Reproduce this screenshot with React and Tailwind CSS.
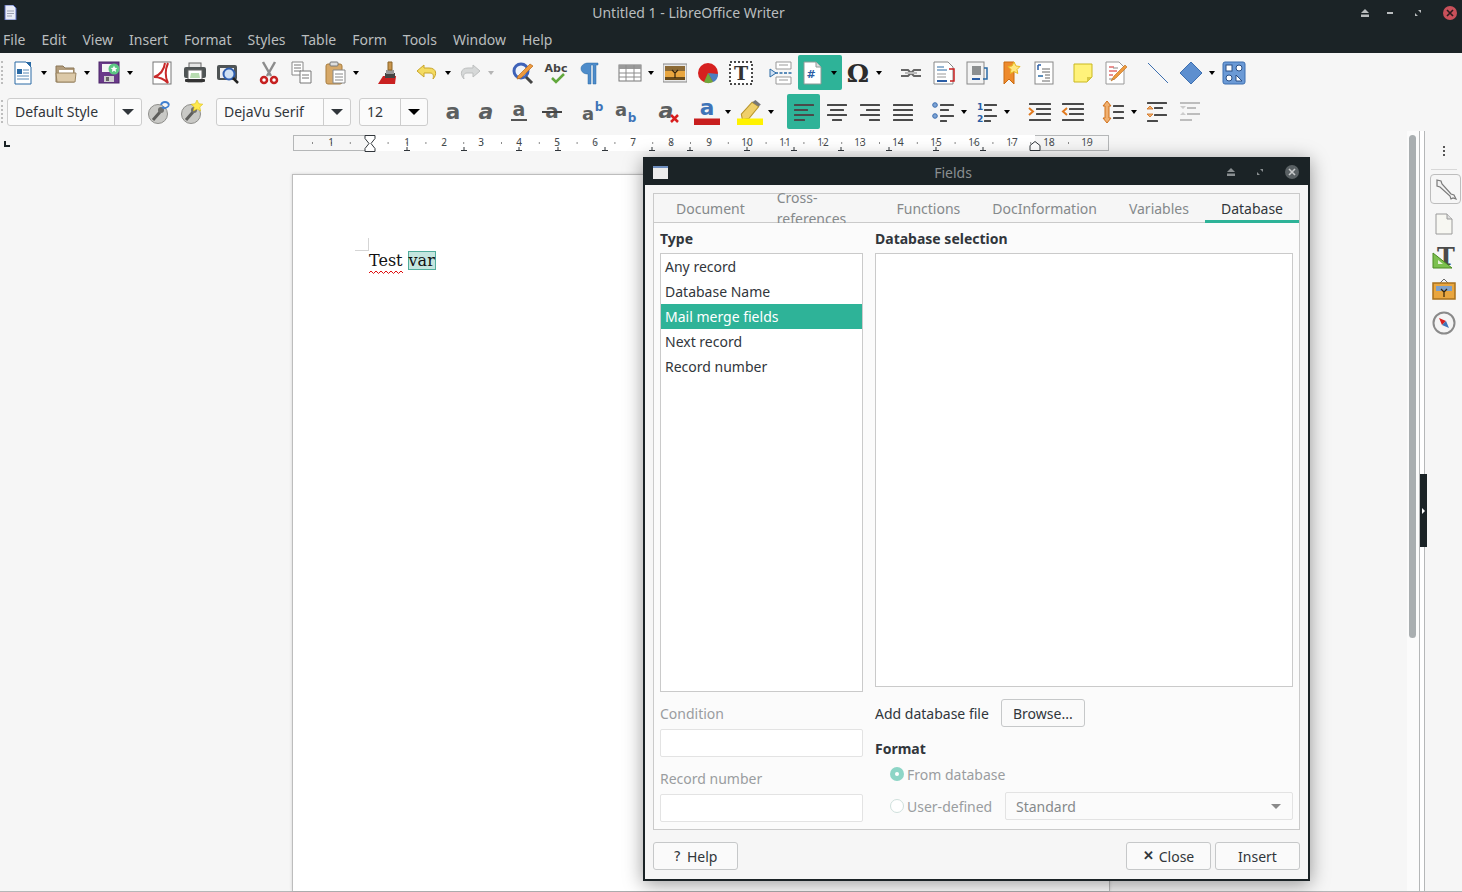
const Svg = ({ size = 24, children }) => (
  <svg width={size} height={size} viewBox="0 0 24 24" className="block shrink-0">{children}</svg>
)

const Lines = ({ rows }) => (
  <>
    {rows.map(([x, y, w], i) => (
      <rect key={i} x={x} y={y} width={w} height="2" rx="0.5" fill="#4a4a4a" />
    ))}
  </>
)

const Letter = ({ ch, x = 12, y = 17, size = 20, fill = "#5c5f60", style = "normal" }) => (
  <text x={x} y={y} textAnchor="middle" fontFamily="DejaVu Sans" fontWeight="700" fontStyle={style} fontSize={size} fill={fill}>{ch}</text>
)

const Icons = {
  newDoc: <Svg><path d="M4 1h11l5 5v17H4z" fill="#fff" stroke="#2a6aa5" /><path d="M15 1h5v5z" fill="#2a6aa5" /><rect x="6" y="8" width="5" height="5" fill="#2a6aa5" /><path d="M12 9h6M12 12h6M6 15h12M6 18h12" stroke="#5b8ab5" /></Svg>,
  open: <Svg><path d="M2 5h7l2 2h9v14H2z" fill="#b39d7d" stroke="#8b7657" /><path d="M5 9h14v3H5z" fill="#fff" /><path d="M2 12h20l-1 9H3z" fill="#dcc9a8" stroke="#9a8562" /></Svg>,
  save: <Svg><rect x="2" y="1" width="20" height="21" fill="#6a3a8a" stroke="#4a2468" /><rect x="5" y="3" width="13" height="8" fill="#f3f3f3" /><rect x="7" y="15" width="10" height="6" fill="#cfcfcf" /><rect x="9" y="16" width="3" height="4" fill="#666" /><circle cx="17" cy="8" r="5.5" fill="#5bc783" /><path d="M17 4.5l1 2.3 2.4.2-1.8 1.6.5 2.4-2.1-1.2-2.1 1.2.5-2.4L13.6 7l2.4-.2z" fill="#fff" /></Svg>,
  pdf: <Svg><rect x="3" y="1" width="18" height="22" fill="#fff" stroke="#777" /><path d="M15 2C14 9 10 14 4 16c5 0 10 2 14 6-3-6-3-13 0-20" fill="none" stroke="#c92a2a" strokeWidth="2" /></Svg>,
  print: <Svg><rect x="6" y="2" width="12" height="5" fill="#e5e5e5" stroke="#666" /><rect x="1" y="6" width="22" height="11" rx="2" fill="#4f5455" /><rect x="5" y="9" width="14" height="12" fill="#fff" stroke="#666" /><path d="M8 12h8l1 5H7z" fill="#b7dcb0" /><rect x="2" y="18" width="20" height="3" rx="1" fill="#333" /></Svg>,
  preview: <Svg><rect x="1" y="4" width="20" height="15" rx="2" fill="#4f5455" /><rect x="4" y="7" width="14" height="10" fill="#eee" /><circle cx="13" cy="13" r="5.5" fill="#cfe0f3" stroke="#2f5fb0" strokeWidth="2" /><path d="M17 17l5 5" stroke="#222" strokeWidth="2.5" /></Svg>,
  cut: <Svg><path d="M6 1l8 14M18 1l-8 14" stroke="#8c8c8c" strokeWidth="2.5" /><circle cx="7" cy="19" r="3" fill="#fff" stroke="#c62020" strokeWidth="2.5" /><circle cx="17" cy="19" r="3" fill="#fff" stroke="#c62020" strokeWidth="2.5" /></Svg>,
  copy: <Svg><path d="M2 1h11v13H2z" fill="#fff" stroke="#888" /><path d="M4 4h7M4 7h7M4 10h7" stroke="#777" /><path d="M10 10h11v12H10z" fill="#fff" stroke="#777" /><path d="M12 14h7M12 17h7" stroke="#777" /></Svg>,
  paste: <Svg><rect x="3" y="3" width="16" height="20" rx="2" fill="#d6a868" stroke="#a87c3d" /><rect x="7" y="1" width="8" height="4" rx="1" fill="#ddd" stroke="#777" /><path d="M10 9h12v13H10z" fill="#fff" stroke="#888" /><path d="M12 13h8M12 16h8M12 19h8" stroke="#888" /></Svg>,
  clone: <Svg><path d="M2 23l5-8h13l-1 8z" fill="#c92020" /><rect x="9" y="12" width="10" height="5" fill="#444" /><rect x="10" y="9" width="8" height="4" fill="#999" /><path d="M12 1h4v8h-4z" fill="#c9964d" stroke="#8c6527" /></Svg>,
  undo: <Svg><path d="M9 4L2 10l7 6v-4h6c3 0 4 2 3 6 4-4 4-11-4-11H9z" fill="#f4db61" stroke="#c9a52a" /></Svg>,
  redo: <Svg><path d="M15 4l7 6-7 6v-4H9c-3 0-4 2-3 6-4-4-4-11 4-11h5z" fill="#d6d8d8" stroke="#bdbfbf" /></Svg>,
  find: <Svg><circle cx="10" cy="10" r="7" fill="#eef3fa" stroke="#3e62b8" strokeWidth="3" /><path d="M15 16l6 6" stroke="#444" strokeWidth="3" /><path d="M7 15L19 3l3 2-12 12-4 1z" fill="#ee9a3e" stroke="#b96a1a" strokeWidth="0.7" /></Svg>,
  spell: <Svg><text x="12" y="11" textAnchor="middle" fontFamily="DejaVu Sans" fontWeight="700" fontSize="11" fill="#444">Abc</text><path d="M8 17l4 4 8-8" fill="none" stroke="#62a83c" strokeWidth="2.5" /></Svg>,
  para: <Svg><path d="M10 2h10v2h-2v19h-3V4h-2v19h-3V13c-4 0-7-2-7-5.500S7 2 10 2z" fill="#4e8cca" stroke="#2a6aa5" strokeWidth="0.5" /></Svg>,
  table: <Svg><rect x="1" y="4" width="22" height="16" fill="#fff" stroke="#777" /><rect x="1" y="4" width="22" height="4" fill="#9a9a9a" /><path d="M1 12h22M1 16h22M8 4v16M16 4v16" stroke="#8c8c8c" /></Svg>,
  image: <Svg><rect x="0" y="3" width="24" height="18" fill="#e8e8e8" stroke="#888" /><rect x="2" y="5" width="20" height="14" fill="#e9a63f" /><rect x="2" y="5" width="20" height="5" fill="#8c6a35" /><path d="M2 16h20v3H2z" fill="#6a4b1a" /><path d="M12 17v-6M12 12l-3-3M12 12l3-3" stroke="#33240d" strokeWidth="1.200" /></Svg>,
  chart: <Svg><circle cx="12" cy="12" r="10" fill="#d6201f" /><path d="M12 12l10 1c0 4-2 7-5 8z" fill="#4c7fc0" /><path d="M12 12l5 9c-3 1-5 2-9 0z" fill="#70a83a" /></Svg>,
  textbox: <Svg><rect x="1" y="1" width="22" height="22" fill="#fff" stroke="#111" strokeWidth="1.500" strokeDasharray="2 2" /><text x="12" y="19" textAnchor="middle" fontFamily="DejaVu Serif" fontWeight="700" fontSize="19" fill="#333">T</text></Svg>,
  pageBreak: <Svg><path d="M7 1h15v7H7z" fill="#fff" stroke="#999" /><path d="M10 4h9" stroke="#999" /><path d="M7 23v-7h15v7z" fill="#fff" stroke="#999" /><path d="M10 19h9" stroke="#999" /><path d="M6 12h18" stroke="#2a6aa5" strokeDasharray="3 1.500" strokeWidth="1.500" /><path d="M1 8l6 4-6 4z" fill="#cfe0f3" stroke="#2a6aa5" /></Svg>,
  field: <Svg><path d="M4 1h12l5 5v17H4z" fill="#fff" stroke="#8d9a96" /><path d="M16 1v5h5" fill="#ddd" stroke="#8d9a96" /><text x="11" y="17" textAnchor="middle" fontFamily="DejaVu Sans" fontWeight="700" fontSize="11" fill="#2a5da5">#</text></Svg>,
  omega: <Svg><text x="12" y="21" textAnchor="middle" fontFamily="DejaVu Serif" fontWeight="700" fontSize="25" fill="#2c2c2c">Ω</text></Svg>,
  link: <Svg><path d="M2 9h7l3 3 3-3h7M2 15h7l3-3 3 3h7" fill="none" stroke="#666" strokeWidth="2" /><path d="M6 12h12" stroke="#bbb" strokeWidth="2" /></Svg>,
  footnote: <Svg><path d="M2 1h14l5 5v17H2z" fill="#fff" stroke="#888" /><path d="M5 6h7M5 9h10" stroke="#2a6aa5" /><path d="M5 13h9M5 16h9" stroke="#999" /><rect x="5" y="19" width="10" height="2" fill="#2a5da5" /><path d="M17 8h5v12h-4" fill="none" stroke="#c92020" strokeWidth="1.500" /></Svg>,
  crossRef: <Svg><rect x="2" y="1" width="17" height="22" fill="#f3f3f3" stroke="#888" /><rect x="7" y="5" width="9" height="9" fill="#8c8f90" /><rect x="7" y="17" width="8" height="2" fill="#2a5da5" /><path d="M19 7h3v11h-4" fill="none" stroke="#2a6aa5" strokeWidth="1.500" /></Svg>,
  bookmark: <Svg><path d="M5 1h10v22l-5-5-5 5z" fill="#ee8a2c" stroke="#c96a10" /><path d="M15 1l2 4 4 .5-3 3 .8 4-3.800-2-3.800 2 .8-4-3-3 4-.5z" fill="#ffe680" stroke="#e8b820" /></Svg>,
  index: <Svg><rect x="3" y="1" width="18" height="22" fill="#fff" stroke="#888" /><path d="M6 4h3M6 4v5" stroke="#2a5da5" strokeWidth="1.500" /><path d="M10 8h8M10 11h8M13 14h5M13 17h5M10 20h8" stroke="#666" /><path d="M6 15h5" stroke="#2a6aa5" strokeWidth="1.500" /></Svg>,
  note: <Svg><path d="M3 3h18v13l-5 5H3z" fill="#fff27a" stroke="#c9b820" /><path d="M21 16h-5v5z" fill="#d8c944" /></Svg>,
  track: <Svg><path d="M2 1h13l5 5v17H2z" fill="#fff" stroke="#999" /><path d="M5 6h5M5 10h8M5 14h4" stroke="#d62020" /><path d="M5 18h6M9 7h5" stroke="#888" /><path d="M7 20l3-5L21 4l2 2-11 11z" fill="#ee9a3e" stroke="#b96a1a" strokeWidth="0.600" /></Svg>,
  line: <Svg><path d="M2 2l20 20" stroke="#3d6fb0" /></Svg>,
  diamond: <Svg><path d="M12 1l11 11-11 11L1 12z" fill="#5d8fcf" stroke="#3d6fb0" /></Svg>,
  shapes: <Svg><rect x="1" y="1" width="22" height="22" rx="2" fill="#6b9ad6" stroke="#3d6fb0" /><rect x="4" y="4" width="6" height="6" fill="#fff" stroke="#2a4f85" /><circle cx="17" cy="7" r="3" fill="#fff" stroke="#2a4f85" /><circle cx="7" cy="17" r="3" fill="#fff" stroke="#2a4f85" /><path d="M14 20v-6l6 6z" fill="#fff" stroke="#2a4f85" /></Svg>,
  styleUpdate: <Svg><circle cx="11" cy="14" r="9.500" fill="#c9c9c6" stroke="#8d8d8a" /><path d="M6 20l7-8" stroke="#5e5e5c" strokeWidth="3" /><circle cx="14" cy="10" r="3" fill="#6e6e6b" /><path d="M14 5c1-4 7-4 8 0M22 5c-1 3-5 4-7 2" fill="none" stroke="#3f7fd0" strokeWidth="1.800" /></Svg>,
  styleNew: <Svg><circle cx="11" cy="14" r="9.500" fill="#c9c9c6" stroke="#8d8d8a" /><path d="M6 20l7-8" stroke="#5e5e5c" strokeWidth="3" /><circle cx="14" cy="10" r="3" fill="#6e6e6b" /><path d="M17 0l1.800 3.700 4 .5-3 2.800.8 4-3.600-2-3.600 2 .8-4-3-2.800 4-.5z" fill="#ffe94d" stroke="#d8bd10" strokeWidth="0.600" /></Svg>,
  bold: <Svg><Letter ch="a" size={22} y={19} /></Svg>,
  italic: <Svg><Letter ch="a" size={22} y={19} style="italic" /></Svg>,
  underline: <Svg><Letter ch="a" size={19} y={16} /><rect x="4" y="19" width="16" height="2" fill="#555" /></Svg>,
  strike: <Svg><Letter ch="a" size={20} y={18} /><rect x="2" y="11" width="20" height="2" fill="#444" /></Svg>,
  sup: <Svg><Letter ch="a" x={8} size={18} y={20} /><Letter ch="b" x={19} size={12} y={11} fill="#3f74b8" /></Svg>,
  sub: <Svg><Letter ch="a" x={8} size={18} y={16} /><Letter ch="b" x={19} size={12} y={22} fill="#3f74b8" /></Svg>,
  clear: <Svg><Letter ch="a" x={10} size={22} y={18} style="italic" /><path d="M15 15l7 7M22 15l-7 7" stroke="#d81e1e" strokeWidth="2.500" /></Svg>,
  fontColor: <Svg size={26}><Letter ch="a" size={20} y={15} fill="#3f74b8" /><rect x="0" y="18" width="24" height="6" fill="#c81e1e" /></Svg>,
  highlight: <Svg size={26}><path d="M4 14L14 3l6 4-9 11-6 1z" fill="#efcf6a" stroke="#b9962a" /><path d="M14 3l3-2 5 4-2 2z" fill="#777" /><rect x="0" y="18" width="24" height="6" fill="#fff200" /></Svg>,
  left: <Svg><Lines rows={[[2, 4, 20], [2, 9, 14], [2, 14, 20], [2, 19, 11]]} /></Svg>,
  center: <Svg><Lines rows={[[2, 4, 20], [5, 9, 14], [2, 14, 20], [7, 19, 10]]} /></Svg>,
  right: <Svg><Lines rows={[[2, 4, 20], [8, 9, 14], [2, 14, 20], [11, 19, 11]]} /></Svg>,
  justify: <Svg><Lines rows={[[2, 4, 20], [2, 9, 20], [2, 14, 20], [2, 19, 20]]} /></Svg>,
  bullets: <Svg><circle cx="4" cy="5" r="2.300" fill="#7da3d4" stroke="#3d6fb0" /><circle cx="4" cy="16" r="2.300" fill="#7da3d4" stroke="#3d6fb0" /><Lines rows={[[9, 4, 14], [9, 9, 9], [9, 15, 14], [9, 20, 7]]} /></Svg>,
  numbers: <Svg><text x="3" y="10" fontFamily="DejaVu Sans" fontWeight="700" fontSize="9" fill="#2a5da5">1</text><text x="3" y="22" fontFamily="DejaVu Sans" fontWeight="700" fontSize="9" fill="#2a5da5">2</text><Lines rows={[[10, 4, 13], [10, 9, 8], [10, 15, 13], [10, 20, 7]]} /></Svg>,
  indent: <Svg><Lines rows={[[1, 3, 22], [8, 8, 15], [8, 13, 15], [1, 19, 22]]} /><path d="M1 8l4 3.500L1 15" fill="none" stroke="#e07a20" strokeWidth="2" /></Svg>,
  outdent: <Svg><Lines rows={[[1, 3, 22], [8, 8, 15], [8, 13, 15], [1, 19, 22]]} /><path d="M6 8l-4 3.500L6 15" fill="none" stroke="#e07a20" strokeWidth="2" /></Svg>,
  lineSpace: <Svg><path d="M6 1l4 5H8v12h2l-4 5-4-5h2V6H2z" fill="#f0b070" stroke="#d0701a" /><Lines rows={[[12, 5, 11], [12, 11, 11], [12, 17, 11]]} /></Svg>,
  paraUp: <Svg><Lines rows={[[2, 2, 20], [9, 7, 9], [9, 14, 13], [2, 20, 11]]} /><path d="M2 9l3-3 3 3zM2 14l3 3 3-3z" fill="#f0b070" stroke="#d0701a" strokeWidth="0.800" /></Svg>,
  paraDown: <Svg><rect x="2" y="2" width="20" height="2" fill="#bdbdbd" /><rect x="9" y="7" width="9" height="2" fill="#bdbdbd" /><rect x="9" y="13" width="13" height="2" fill="#bdbdbd" /><rect x="2" y="19" width="12" height="2" fill="#bdbdbd" /><path d="M2 6l3 3 3-3zM2 15l3-3 3 3z" fill="#ccc" /></Svg>,
}

const Tool = ({ icon, className = "" }) => (
  <div className={"flex w-[33px] shrink-0 items-center justify-center " + className}>{Icons[icon]}</div>
)

const Arrow = ({ className = "", off = false }) => (
  <div className={"flex w-[10px] shrink-0 items-center justify-center " + className}>
    <span className={off ? "border-x-[3px] border-t-[4px] border-x-transparent border-t-[#b5b5b5]" : "border-x-[3px] border-t-[4px] border-x-transparent border-t-black"} />
  </div>
)

const Grip = () => <div className="absolute left-px top-2 bottom-2 w-[2px] border-l-2 border-dotted border-[#bdbdbd]" />

const ToolCombo = ({ label, className, arrowClass, dark = false }) => (
  <div className={"flex h-[28px] shrink-0 items-stretch rounded-[3px] border border-[#cdcdcd] bg-[#fbfbfb] " + className}>
    <span className="flex flex-1 items-center pl-[7px] text-[14px] text-[#31363b]">{label}</span>
    <span className={"flex items-center justify-center border-l border-[#cdcdcd] " + arrowClass}>
      <span className={dark ? "border-x-[6px] border-t-[6px] border-x-transparent border-t-black" : "border-x-[6px] border-t-[6px] border-x-transparent border-t-[#31363b]"} />
    </span>
  </div>
)

const WindowButtons = ({ dialog }) => {
  const tone = dialog ? "#8a8f91" : "#b9bdbe"
  return (
    <>
      <svg width="10" height="8" viewBox="0 0 10 8" className="shrink-0"><path d="M5 0l4 4H1zM1 5.500h8V8H1z" fill={tone} /></svg>
      {!dialog && <span className="ml-[17px] h-[2px] w-[6px] bg-[#b9bdbe]" />}
      <svg width="6" height="6" viewBox="0 0 6 6" className={dialog ? "ml-[21px] shrink-0" : "ml-[22px] shrink-0"}><path d="M0 6V3l3 3zM6 0v3L3 0z" fill={tone} /></svg>
      <span className={dialog ? "ml-[22px] flex h-[14px] w-[14px] items-center justify-center rounded-full bg-[#5a6164]" : "ml-[22px] flex h-[14px] w-[14px] items-center justify-center rounded-full bg-[#c9505a]"}>
        <svg width="8" height="8" viewBox="0 0 8 8"><path d="M1 1l6 6M7 1L1 7" stroke={dialog ? "#c9cbcc" : "#2a1c1e"} strokeWidth="1.600" /></svg>
      </span>
    </>
  )
}

const Ruler = () => {
  const nums = [[331, "1"], [407, "1"], [444, "2"], [481, "3"], [519, "4"], [557, "5"], [595, "6"], [633, "7"], [671, "8"], [709, "9"], [747, "10"], [785, "11"], [823, "12"], [860, "13"], [898, "14"], [936, "15"], [974, "16"], [1012, "17"], [1049, "18"], [1087, "19"]]
  const ticks = []
  for (let x = 312; x < 1105; x += 18.9) ticks.push(x)
  return (
    <svg width="820" height="20" viewBox="292 133 820 20" className="block shrink-0">
      <rect x="293.500" y="135.500" width="815" height="15" fill="#f6f6f6" stroke="#b5b7b8" />
      <rect x="370" y="135" width="665" height="16" fill="#fff" />
      {ticks.map(x => <rect key={x} x={x} y="142" width="1" height="2" fill="#8a8a8a" />)}
      {nums.map(([x, t]) => (
        <text key={x} x={x} y="146" textAnchor="middle" fontFamily="Noto Sans" fontSize="10" fill="#44494c">{t}</text>
      ))}
      {[407, 464, 519, 558, 605, 652, 690, 747, 794, 841, 889, 936, 983].map(x => (
        <path key={x} d={`M${x - 3} 150.500h6M${x} 147v3`} stroke="#31363b" fill="none" />
      ))}
      <path d="M365 135.500h10v3l-4 5 4 5v3h-10v-3l4-5-4-5z" fill="#fff" stroke="#31363b" />
      <path d="M1030 150.500v-5l5-4 5 4v5z" fill="#fff" stroke="#31363b" />
    </svg>
  )
}

const Btn = ({ children, className = "" }) => (
  <div className={"flex h-[28px] items-center justify-center rounded-[3px] border border-[#c6c8c9] bg-[#fafafa] text-[#31363b] " + className}>{children}</div>
)

const SideIcon = ({ children, className = "" }) => (
  <div className={"flex justify-center " + className}>{children}</div>
)

export default function App() {
  const tabs = ["Document", "Cross-references", "Functions", "DocInformation", "Variables"]
  const types = ["Any record", "Database Name", "Mail merge fields", "Next record", "Record number"]
  const menus = ["File", "Edit", "View", "Insert", "Format", "Styles", "Table", "Form", "Tools", "Window", "Help"]

  return (
    <div className="relative flex h-[892px] w-[1462px] flex-col overflow-hidden bg-[#f6f6f6] font-['Noto_Sans',sans-serif] text-[14px] text-[#31363b]">
      {/* title + menu */}
      <div className="h-[53px] shrink-0 bg-[#1b2326] text-[#b9bdbe]">
        <div className="flex h-[25px] items-center pl-[4px] pr-[5px]">
          <svg width="13" height="15" viewBox="0 0 13 15" className="shrink-0"><path d="M1 0h8l3 3v12H1z" fill="#e8ebf6" stroke="#5a6fc0" /><path d="M3 6h7M3 8.500h7M3 11h5" stroke="#9a9fb0" /></svg>
          <div className="flex-1 text-center text-[14px]">Untitled 1 - LibreOffice Writer</div>
          <WindowButtons />
        </div>
        <div className="mt-[4px] flex gap-[16px] pl-[3px]">
          {menus.map(m => <span key={m}>{m}</span>)}
        </div>
      </div>

      {/* standard toolbar */}
      <div className="relative flex h-[39px] shrink-0">
        <Grip />
        <Tool icon="newDoc" className="ml-[6px]" /><Arrow />
        <Tool icon="open" /><Arrow />
        <Tool icon="save" /><Arrow />
        <Tool icon="pdf" className="ml-[10px]" />
        <Tool icon="print" />
        <Tool icon="preview" />
        <Tool icon="cut" className="ml-[8px]" />
        <Tool icon="copy" />
        <Tool icon="paste" /><Arrow />
        <Tool icon="clone" className="ml-[10px]" />
        <Tool icon="undo" className="ml-[6px]" /><Arrow />
        <Tool icon="redo" /><Arrow off />
        <Tool icon="find" className="ml-[10px]" />
        <Tool icon="spell" />
        <Tool icon="para" className="ml-px" />
        <Tool icon="table" className="ml-[7px]" /><Arrow />
        <Tool icon="image" className="ml-[2px]" />
        <Tool icon="chart" />
        <Tool icon="textbox" />
        <Tool icon="pageBreak" className="ml-[7px]" />
        <div className="ml-px mt-[2px] flex h-[35px] w-[44px] shrink-0 items-center rounded-[2px] bg-[#2eb398] pl-[2px]">
          {Icons.field}
          <Arrow className="ml-[5px]" />
        </div>
        <div className="flex w-[31px] shrink-0 items-center justify-center">{Icons.omega}</div>
        <Arrow className="ml-px" />
        <Tool icon="link" className="ml-[10px]" />
        <Tool icon="footnote" />
        <Tool icon="crossRef" />
        <Tool icon="bookmark" className="ml-px" />
        <Tool icon="index" />
        <Tool icon="note" className="ml-[6px]" />
        <Tool icon="track" />
        <Tool icon="line" className="ml-[9px]" />
        <Tool icon="diamond" /><Arrow />
        <Tool icon="shapes" />
      </div>

      {/* formatting toolbar */}
      <div className="relative flex h-[39px] shrink-0 items-center">
        <Grip />
        <ToolCombo label="Default Style" className="ml-[7px] w-[135px]" arrowClass="w-[27px]" />
        <Tool icon="styleUpdate" className="self-stretch" />
        <Tool icon="styleNew" className="self-stretch" />
        <ToolCombo label="DejaVu Serif" className="ml-[8px] w-[135px]" arrowClass="w-[27px]" />
        <ToolCombo label="12" className="ml-[8px] w-[69px]" arrowClass="w-[27px]" dark />
        <Tool icon="bold" className="ml-[8px] self-stretch" />
        <Tool icon="italic" className="self-stretch" />
        <Tool icon="underline" className="self-stretch" />
        <Tool icon="strike" className="self-stretch" />
        <Tool icon="sup" className="ml-[7px] self-stretch" />
        <Tool icon="sub" className="self-stretch" />
        <Tool icon="clear" className="ml-[10px] self-stretch" />
        <Tool icon="fontColor" className="ml-[6px] self-stretch" /><Arrow className="self-stretch" />
        <Tool icon="highlight" className="self-stretch" /><Arrow className="self-stretch" />
        <Tool icon="left" className="ml-[11px] h-[35px] rounded-[2px] bg-[#2eb398]" />
        <Tool icon="center" className="self-stretch" />
        <Tool icon="right" className="self-stretch" />
        <Tool icon="justify" className="self-stretch" />
        <Tool icon="bullets" className="ml-[7px] self-stretch" /><Arrow className="self-stretch" />
        <Tool icon="numbers" className="self-stretch" /><Arrow className="self-stretch" />
        <Tool icon="indent" className="ml-[11px] self-stretch" />
        <Tool icon="outdent" className="self-stretch" />
        <Tool icon="lineSpace" className="ml-[7px] self-stretch" /><Arrow className="self-stretch" />
        <Tool icon="paraUp" className="ml-px self-stretch" />
        <Tool icon="paraDown" className="self-stretch" />
      </div>

      {/* workspace */}
      <div className="flex min-h-0 flex-1 border-b border-[#b5b7b8]">
        <div className="flex w-[1407px] shrink-0 flex-col">
          <div className="flex h-[43px] shrink-0 pt-[2px]">
            <div className="ml-[4px] mt-[8px] h-[6px] w-[6px] border-b-2 border-l-2 border-[#1b2326]" />
            <div className="ml-[282px]"><Ruler /></div>
          </div>
          <div className="ml-[292px] w-[818px] flex-1 border-x border-t border-[#bdbdbd] bg-white pl-[62px] pt-[63px] shadow-[0_0_3px_rgba(0,0,0,0.15)]">
            <div className="h-[13px] w-[14px] border-b border-r border-[#d5d5d5]" />
            <div className="ml-[14px] flex h-[19px] items-center font-['DejaVu_Serif',serif] text-[16px] text-[#111]">
              <span className="relative">
                Test
                <svg width="34" height="4" viewBox="0 0 34 4" className="absolute -bottom-[2px] left-0">
                  <path d="M0 2l2-2 2.500 2.500L7 0l2.500 2.500L12 0l2.500 2.500L17 0l2.500 2.500L22 0l2.500 2.500L27 0l2.500 2.500L32 0l2 2" fill="none" stroke="#e01010" />
                </svg>
              </span>
              <span className="ml-[5px] flex h-[19px] items-center border border-[#52ac9c] bg-[#c4e6df] leading-none">var</span>
            </div>
          </div>
        </div>

        <div className="w-[12px] shrink-0 bg-[#fbfbfb] pl-[2px] pt-[4px]">
          <div className="h-[503px] w-[7px] rounded-full bg-[#a9aeb0]" />
        </div>

        <div className="relative flex flex-1 border-l border-[#b5b7b8]">
          <div className="w-[5px] shrink-0 border-r border-[#b5b7b8] bg-white" />
          <div className="flex-1 pt-[13px]">
            <SideIcon className="h-[13px] flex-col items-center gap-[2px]">
              <span className="h-[2px] w-[2px] bg-[#555]" /><span className="h-[2px] w-[2px] bg-[#555]" /><span className="h-[2px] w-[2px] bg-[#555]" />
            </SideIcon>
            <div className="mx-auto mt-[12px] h-px w-[26px] bg-[#d8d8d8]" />
            <div className="ml-[5px] mt-[4px] flex h-[30px] w-[31px] items-center justify-center rounded-[4px] border border-[#bdbdbd]">
              <svg width="24" height="24" viewBox="0 0 24 24"><path d="M3 3l4 1 1 3 9 10 3 1 2 4-3-1-2 1-1-3-10-9-3-1z" fill="#f2f2f2" stroke="#7a7a7a" strokeWidth="1.200" /></svg>
            </div>
            <SideIcon className="mt-[8px]">
              <svg width="20" height="24" viewBox="0 0 20 24"><path d="M2 2h11l5 5v15H2z" fill="#f7f7f2" stroke="#9a9a9a" /><path d="M13 2v5h5" fill="#ddd" stroke="#9a9a9a" /></svg>
            </SideIcon>
            <SideIcon className="mt-[8px]">
              <svg width="24" height="26" viewBox="0 0 24 26"><text x="14" y="21" textAnchor="middle" fontFamily="DejaVu Serif" fontWeight="700" fontSize="24" fill="#4a4a4a">T</text><path d="M1 24V9l19 15z" fill="#7cc04f" stroke="#4a8a22" /><path d="M6 20v-4l5 4z" fill="#e6f2d6" /></svg>
            </SideIcon>
            <SideIcon className="mt-[8px]">
              <svg width="24" height="22" viewBox="0 0 24 22"><path d="M8 5l4-4 4 4" fill="none" stroke="#666" /><rect x="1" y="5" width="22" height="16" fill="#e9a63f" stroke="#a8701d" strokeWidth="1.500" /><rect x="4" y="8" width="16" height="5" fill="#7ea0c8" /><path d="M12 19v-6M12 14l-3-3M12 14l3-3" stroke="#33240d" strokeWidth="1.200" /></svg>
            </SideIcon>
            <SideIcon className="mt-[11px]">
              <svg width="24" height="24" viewBox="0 0 24 24"><circle cx="12" cy="12" r="10.500" fill="#f4f4f4" stroke="#8a8a8a" strokeWidth="2" /><path d="M7 7l7 3-4 4z" fill="#d82020" /><path d="M17 17l-7-3 4-4z" fill="#3f74b8" /></svg>
            </SideIcon>
          </div>
          <div className="absolute left-0 top-[343px] flex h-[73px] w-[7px] items-center justify-center bg-[#1b2326]">
            <span className="border-y-[3px] border-l-[3px] border-y-transparent border-l-white" />
          </div>
        </div>
      </div>

      {/* Fields dialog */}
      <div className="absolute left-[643px] top-[157px] flex h-[724px] w-[667px] flex-col border-2 border-[#1b2326] bg-[#f6f6f6] shadow-[0_3px_18px_rgba(0,0,0,0.4)]">
        <div className="flex h-[26px] shrink-0 items-center bg-[#1b2326] pl-[8px] pr-[9px] text-[#8a8f91]">
          <svg width="15" height="13" viewBox="0 0 15 13" className="shrink-0"><rect width="15" height="13" fill="#ececec" /><rect width="15" height="2" fill="#6f8fc0" /></svg>
          <div className="flex-1 pl-[12px] text-center">Fields</div>
          <WindowButtons dialog />
        </div>

        <div className="mx-[8px] mt-[8px] flex h-[637px] shrink-0 flex-col border border-[#cacaca]">
          <div className="flex h-[29px] shrink-0 border-b border-[#cacaca] pl-[6px] text-[#85898b]">
            {tabs.map(t => <div key={t} className="flex h-[28px] items-center px-[16px]">{t}</div>)}
            <div className="-mb-px flex h-[29px] items-center border-b-[3px] border-[#2eb398] px-[16px] pt-[2px] text-[#31363b]">Database</div>
          </div>

          <div className="flex flex-1 gap-[12px] bg-[#fbfbfb] px-[6px] pt-[6px]">
            <div className="flex w-[203px] shrink-0 flex-col">
              <div className="font-bold leading-[19px]">Type</div>
              <div className="mt-[5px] h-[439px] border border-[#cacaca] bg-white">
                {types.map(t => (
                  <div key={t} className={t === "Mail merge fields" ? "flex h-[25px] items-center bg-[#2eb398] px-[4px] text-white" : "flex h-[25px] items-center px-[4px]"}>{t}</div>
                ))}
              </div>
              <div className="mt-[12px] leading-[19px] text-[#9a9da0]">Condition</div>
              <div className="mt-[6px] h-[28px] rounded-[2px] border border-[#e3e3e3] bg-white" />
              <div className="mt-[12px] leading-[19px] text-[#9a9da0]">Record number</div>
              <div className="mt-[6px] h-[28px] rounded-[2px] border border-[#e3e3e3] bg-white" />
            </div>

            <div className="flex flex-1 flex-col">
              <div className="font-bold leading-[19px]">Database selection</div>
              <div className="mt-[5px] h-[434px] border border-[#cacaca] bg-white" />
              <div className="mt-[12px] flex items-center gap-[12px]">
                <span>Add database file</span>
                <Btn className="w-[84px]">Browse...</Btn>
              </div>
              <div className="mt-[12px] font-bold leading-[19px]">Format</div>
              <div className="ml-[15px] mt-[6px] flex h-[20px] items-center gap-[3px] text-[#9a9da0]">
                <span className="flex h-[14px] w-[14px] items-center justify-center rounded-full bg-[#8dd5c6]"><span className="h-[4px] w-[4px] rounded-full bg-white" /></span>
                From database
              </div>
              <div className="mt-[8px] flex items-center">
                <div className="ml-[15px] flex w-[115px] items-center gap-[3px] text-[#9a9da0]">
                  <span className="h-[14px] w-[14px] rounded-full border border-[#cfe0dc] bg-white" />
                  User-defined
                </div>
                <div className="flex h-[28px] flex-1 items-center justify-between rounded-[2px] border border-[#e3e3e3] pl-[10px] pr-[11px] text-[#85898b]">
                  Standard
                  <span className="border-x-[5px] border-t-[5px] border-x-transparent border-t-[#8a8a8a]" />
                </div>
              </div>
            </div>
          </div>
        </div>

        <div className="mx-[8px] mt-[12px] flex justify-between">
          <Btn className="w-[85px] gap-[6px]"><span className="font-['DejaVu_Sans',sans-serif] text-[14px]">?</span>Help</Btn>
          <div className="flex gap-[4px]">
            <Btn className="w-[85px] gap-[5px]"><span className="text-[13px] font-bold">✕</span>Close</Btn>
            <Btn className="w-[85px]">Insert</Btn>
          </div>
        </div>
      </div>
    </div>
  )
}
